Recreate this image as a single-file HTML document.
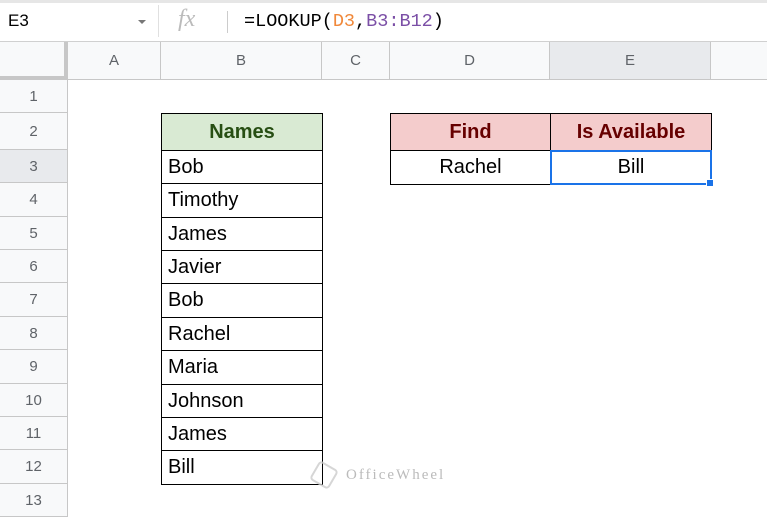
<!DOCTYPE html>
<html><head><meta charset="utf-8"><style>
*{margin:0;padding:0;box-sizing:border-box}
body{width:767px;height:516px;overflow:hidden;background:#fff;font-family:"Liberation Sans",Arial,sans-serif;position:relative}
.a{position:absolute}
.ch{position:absolute;top:42px;height:38px;background:#f8f9fa;border-right:1px solid #c7c7c7;border-bottom:1px solid #c7c7c7;color:#5f6368;font-size:15px;display:flex;align-items:center;justify-content:center}
.rh{position:absolute;left:0;width:68px;background:#f8f9fa;border-right:1px solid #c7c7c7;border-bottom:1px solid #c7c7c7;color:#5f6368;font-size:15px;display:flex;align-items:center;justify-content:center}
.c{position:absolute;border:1.5px solid #000;font-size:20px;color:#000;display:flex;align-items:center;padding-left:6px;background:#fff}
</style></head><body>
<div class="a" style="left:0;top:0;width:767px;height:3px;background:#e6e6e6"></div>
<div class="a" style="left:0;top:3px;width:767px;height:39px;background:#fff;border-bottom:1px solid #d0d0d0"></div>
<div class="a" style="left:8px;top:11px;font-size:17px;color:#000">E3</div>
<div class="a" style="left:138px;top:20px;width:0;height:0;border-left:4px solid transparent;border-right:4px solid transparent;border-top:4px solid #777"></div>
<div class="a" style="left:158px;top:5px;width:1px;height:32px;background:#e0e0e0"></div>
<div class="a" style="left:178px;top:6px;font-size:24px;font-style:italic;color:#bbb;font-family:'Liberation Serif',serif">fx</div>
<div class="a" style="left:227px;top:11px;width:1px;height:22px;background:#ccc"></div>
<div class="a" style="left:244px;top:11px;font-size:18.5px;color:#000;font-family:'Liberation Mono',monospace">=LOOKUP(<span style="color:#f0883a">D3</span>,<span style="color:#7b4fa6">B3:B12</span>)</div>
<div class="ch" style="left:0;width:68px;border-right:4px solid #c7c7c7;border-bottom:4px solid #c7c7c7"></div>
<div class="ch" style="left:68px;width:93px">A</div>
<div class="ch" style="left:161px;width:161px">B</div>
<div class="ch" style="left:322px;width:68px">C</div>
<div class="ch" style="left:390px;width:160px">D</div>
<div class="ch" style="left:550px;width:161px;background:#e8eaed">E</div>
<div class="ch" style="left:711px;width:60px"></div>
<div class="rh" style="top:80px;height:33px">1</div>
<div class="rh" style="top:113px;height:37px">2</div>
<div class="rh" style="top:150px;height:33px;background:#e8eaed">3</div>
<div class="rh" style="top:183px;height:34px">4</div>
<div class="rh" style="top:217px;height:33px">5</div>
<div class="rh" style="top:250px;height:33px">6</div>
<div class="rh" style="top:283px;height:34px">7</div>
<div class="rh" style="top:317px;height:33px">8</div>
<div class="rh" style="top:350px;height:34px">9</div>
<div class="rh" style="top:384px;height:33px">10</div>
<div class="rh" style="top:417px;height:33px">11</div>
<div class="rh" style="top:450px;height:34px">12</div>
<div class="rh" style="top:484px;height:33px">13</div>

<div class="c" style="left:161px;top:113px;width:162px;height:38px;background:#d9ead3;justify-content:center;padding:0;font-weight:bold;color:#274e13">Names</div>
<div class="c" style="left:161px;top:150px;width:162px;height:34.5px">Bob</div>
<div class="c" style="left:161px;top:183px;width:162px;height:35.5px">Timothy</div>
<div class="c" style="left:161px;top:217px;width:162px;height:34.5px">James</div>
<div class="c" style="left:161px;top:250px;width:162px;height:34.5px">Javier</div>
<div class="c" style="left:161px;top:283px;width:162px;height:35.5px">Bob</div>
<div class="c" style="left:161px;top:317px;width:162px;height:34.5px">Rachel</div>
<div class="c" style="left:161px;top:350px;width:162px;height:35.5px">Maria</div>
<div class="c" style="left:161px;top:384px;width:162px;height:34.5px">Johnson</div>
<div class="c" style="left:161px;top:417px;width:162px;height:34.5px">James</div>
<div class="c" style="left:161px;top:450px;width:162px;height:35px">Bill</div>

<div class="c" style="left:390px;top:113px;width:161px;height:38px;background:#f4cccc;justify-content:center;padding:0;font-weight:bold;color:#660000">Find</div>
<div class="c" style="left:550px;top:113px;width:162px;height:38px;background:#f4cccc;justify-content:center;padding:0;font-weight:bold;color:#660000">Is Available</div>
<div class="c" style="left:390px;top:150px;width:161px;height:34.5px;justify-content:center;padding:0">Rachel</div>
<div class="c" style="left:550px;top:150px;width:162px;height:34.5px;justify-content:center;padding:0;border:2px solid #1a73e8">Bill</div>
<div class="a" style="left:706px;top:179px;width:8px;height:8px;background:#1a73e8;border:1px solid #fff"></div>

<div class="a" style="left:313px;top:464px;width:22px;height:22px;border:2px solid #ccc;border-radius:4px;transform:rotate(30deg);opacity:.8"></div>
<div class="a" style="left:346px;top:467px;font-size:15px;color:#bbb;letter-spacing:2px;font-family:'Liberation Serif',serif">OfficeWheel</div>
</body></html>
